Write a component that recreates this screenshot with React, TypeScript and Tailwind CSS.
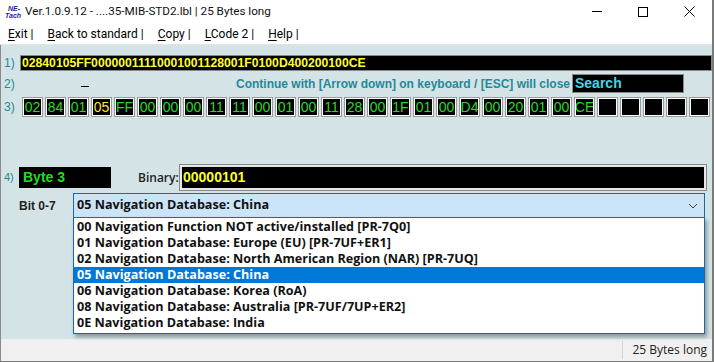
import React from "react";

const bytes = ["02","84","01","05","FF","00","00","00","11","11","00","01","00","11","28","00","1F","01","00","D4","00","20","01","00","CE"];

const options = [
  "00 Navigation Function NOT active/installed [PR-7Q0]",
  "01 Navigation Database: Europe (EU) [PR-7UF+ER1]",
  "02 Navigation Database: North American Region (NAR) [PR-7UQ]",
  "05 Navigation Database: China",
  "06 Navigation Database: Korea (RoA)",
  "08 Navigation Database: Australia [PR-7UF/7UP+ER2]",
  "0E Navigation Database: India",
];

function MenuItem({ first, rest }: { first: string; rest: string }) {
  return (
    <span className="whitespace-pre">
      <span className="underline underline-offset-2">{first}</span>
      {rest}
    </span>
  );
}

export default function App() {
  const empty = Array.from({ length: 5 });
  return (
    <div className="w-[714px] h-[362px] flex flex-col overflow-hidden bg-white border-r-2 border-b border-[#7a7a7a] font-['Liberation_Sans',sans-serif] text-black">
      {/* title bar */}
      <div className="h-[23px] flex items-center shrink-0">
        <div className="w-[25px] pl-[5px] flex flex-col leading-none italic font-bold text-[#1a1aa8] text-[7px] font-['Liberation_Sans']">
          <span className="pl-[3px]">NE-</span>
          <span>Tach</span>
        </div>
        <span className="text-[11.7px] text-[#111] font-['Roboto',sans-serif]">Ver.1.0.9.12 - ....35-MIB-STD2.lbl | 25 Bytes long</span>
        <div className="ml-auto flex items-center h-full">
          <div className="w-[46px] flex justify-center">
            <div className="w-[10px] h-px bg-black" />
          </div>
          <div className="w-[46px] flex justify-center">
            <div className="w-[10px] h-[10px] border border-black" />
          </div>
          <div className="w-[46px] flex justify-center">
            <svg width="11" height="11" viewBox="0 0 11 11">
              <path d="M0.5 0.5 L10.5 10.5 M10.5 0.5 L0.5 10.5" stroke="#000" strokeWidth="1" />
            </svg>
          </div>
        </div>
      </div>

      {/* menu */}
      <div className="h-[22px] flex items-center gap-[14px] pl-[8px] text-[12px] font-['Roboto',sans-serif] shrink-0 border-b border-[#e3e3e3]">
        <MenuItem first="E" rest="xit |" />
        <MenuItem first="B" rest="ack to standard |" />
        <MenuItem first="C" rest="opy |" />
        <MenuItem first="L" rest="Code 2 |" />
        <MenuItem first="H" rest="elp |" />
      </div>

      {/* content */}
      <div className="flex-1 bg-[#d3e3e6] relative flex flex-col pl-[3px] border-l border-[#8a8a8a]">
        {/* row 1 */}
        <div className="flex items-center mt-[10px] h-[16px]">
          <span className="w-[16px] text-[12px] text-[#258a98]">1)</span>
          <div className="flex-1 h-[16px] bg-black border border-[#888] flex items-center pl-[1px] text-[12.2px] text-[#ffff2a] font-bold">
            02840105FF00000011110001001128001F0100D400200100CE
          </div>
        </div>

        {/* row 2 */}
        <div className="flex items-center mt-[3px] h-[19px]">
          <span className="w-[16px] text-[12px] text-[#258a98]">2)</span>
          <span className="ml-[61px] mt-[6px] w-[8px] h-px bg-black" />
          <span className="ml-auto text-[12px] font-bold text-[#1f8a98]">Continue with [Arrow down] on keyboard / [ESC] will close</span>
          <div className="ml-[2px] mr-[28px] w-[112px] h-[19px] bg-black border border-[#888] flex items-center pl-[2px] text-[14px] font-bold text-[#3fd8e8]">
            Search
          </div>
        </div>

        {/* row 3 */}
        <div className="flex items-center mt-[4px] h-[20px]">
          <span className="w-[16px] text-[12px] text-[#258a98]">3)</span>
          <div className="flex gap-[2px] ml-[2px]">
            {bytes.map((b, i) => (
              <div
                key={i}
                className={
                  "w-[21px] h-[20px] bg-black border border-[#9a9a9a] outline outline-1 outline-white -outline-offset-2 flex items-center justify-center text-[14px] " +
                  (i === 3 ? "text-[#ffe23a]" : "text-[#22dc22]")
                }
              >
                {b}
              </div>
            ))}
            {empty.map((_, i) => (
              <div key={"e" + i} className="w-[21px] h-[20px] bg-black border border-[#9a9a9a] outline outline-1 outline-white -outline-offset-2" />
            ))}
          </div>
        </div>

        {/* row 4 */}
        <div className="flex items-center mt-[48px] h-[25px]">
          <span className="w-[15px] text-[11px] text-[#258a98]">4)</span>
          <div className="w-[92px] h-[21px] bg-black flex items-center pl-[4px] text-[14px] font-bold text-[#22dc22]">Byte 3</div>
          <span className="ml-[27px] w-[42px] text-[12px] text-[#222] font-['Open_Sans',sans-serif] font-semibold">Binary:</span>
          <div className="w-[526px] h-[25px] bg-black border-2 border-[#e8e8e8] outline outline-1 outline-[#888] flex items-center pl-[1px] text-[14px] font-bold text-[#ffff2a]">
            00000101
          </div>
        </div>

        {/* select */}
        <div className="flex items-center mt-[3px] h-[25px] relative">
          <span className="w-[69px] pl-[15px] text-[12px] font-bold text-[#222]">Bit 0-7</span>
          <div className="w-[632px] h-[25px] bg-[#cce4f7] border border-[#1b67a9] flex items-center pl-[3px] text-[12.6px] font-bold text-[#111] font-['Open_Sans',sans-serif]">
            05 Navigation Database: China
            <svg className="ml-auto mr-[6px]" width="10" height="6" viewBox="0 0 10 6">
              <path d="M1 1 L5 5 L9 1" fill="none" stroke="#444" strokeWidth="1" />
            </svg>
          </div>

          {/* open dropdown list */}
          <div className="absolute left-[69px] top-[24px] w-[632px] bg-white border border-[#1b67a9] shadow-[2px_3px_4px_rgba(0,0,0,0.35)] pt-px pb-[2px] z-10">
            {options.map((o) => (
              <div
                key={o}
                className={
                  "h-[16px] leading-[16px] flex items-center pl-[3px] text-[12.6px] font-bold font-['Open_Sans',sans-serif] " +
                  (o.startsWith("05") ? "bg-[#0078d7] text-white" : "text-[#111]")
                }
              >
                {o}
              </div>
            ))}
          </div>
        </div>
      </div>

      {/* status bar */}
      <div className="h-[22px] shrink-0 bg-[#f0f0f0] flex items-center border-l border-[#8a8a8a]">
        <div className="ml-auto h-[18px] border-l border-[#d6d6d6] w-[90px] flex items-center justify-end pr-[5px] text-[12px] font-['Open_Sans',sans-serif] text-[#222]">
          25 Bytes long
        </div>
      </div>
    </div>
  );
}
